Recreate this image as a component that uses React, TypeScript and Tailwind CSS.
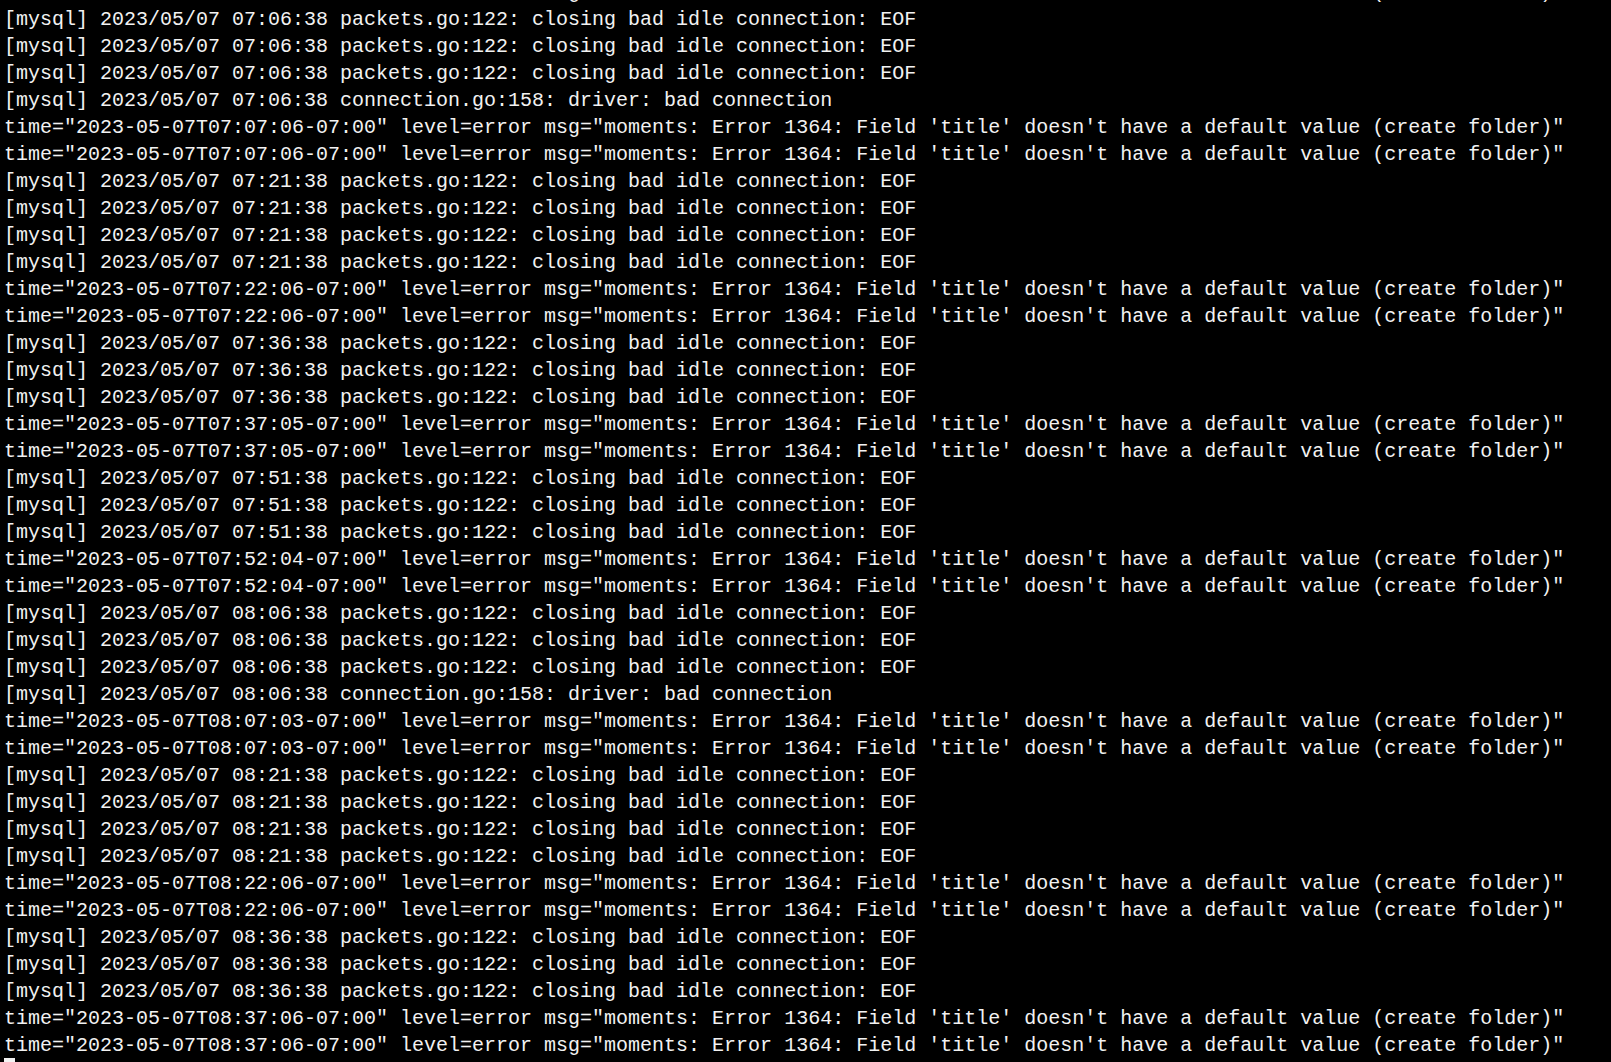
const pkt = (t: string) =>
  `[mysql] 2023/05/07 ${t} packets.go:122: closing bad idle connection: EOF`;
const conn = (t: string) =>
  `[mysql] 2023/05/07 ${t} connection.go:158: driver: bad connection`;
const err = (t: string) =>
  `time="2023-05-07T${t}-07:00" level=error msg="moments: Error 1364: Field 'title' doesn't have a default value (create folder)"`;

const lines: string[] = [
  err("06:52:06"),
  pkt("07:06:38"),
  pkt("07:06:38"),
  pkt("07:06:38"),
  conn("07:06:38"),
  err("07:07:06"),
  err("07:07:06"),
  pkt("07:21:38"),
  pkt("07:21:38"),
  pkt("07:21:38"),
  pkt("07:21:38"),
  err("07:22:06"),
  err("07:22:06"),
  pkt("07:36:38"),
  pkt("07:36:38"),
  pkt("07:36:38"),
  err("07:37:05"),
  err("07:37:05"),
  pkt("07:51:38"),
  pkt("07:51:38"),
  pkt("07:51:38"),
  err("07:52:04"),
  err("07:52:04"),
  pkt("08:06:38"),
  pkt("08:06:38"),
  pkt("08:06:38"),
  conn("08:06:38"),
  err("08:07:03"),
  err("08:07:03"),
  pkt("08:21:38"),
  pkt("08:21:38"),
  pkt("08:21:38"),
  pkt("08:21:38"),
  err("08:22:06"),
  err("08:22:06"),
  pkt("08:36:38"),
  pkt("08:36:38"),
  pkt("08:36:38"),
  err("08:37:06"),
  err("08:37:06"),
];

export default function App() {
  return (
    <div className="h-screen w-full overflow-hidden bg-black">
      <div
        className="-mt-[21px] pl-[4px] text-[20px] leading-[27px] text-[#f2f2f2]"
        style={{ fontFamily: '"Liberation Mono", "DejaVu Sans Mono", monospace' }}
      >
        {lines.map((line, i) => (
          <div key={i} className="whitespace-pre">
            {line}
          </div>
        ))}
        <div className="h-[27px]">
          <div className="-mt-[1px] h-[27px] w-[11px] bg-[#f2f2f2]" />
        </div>
      </div>
    </div>
  );
}
